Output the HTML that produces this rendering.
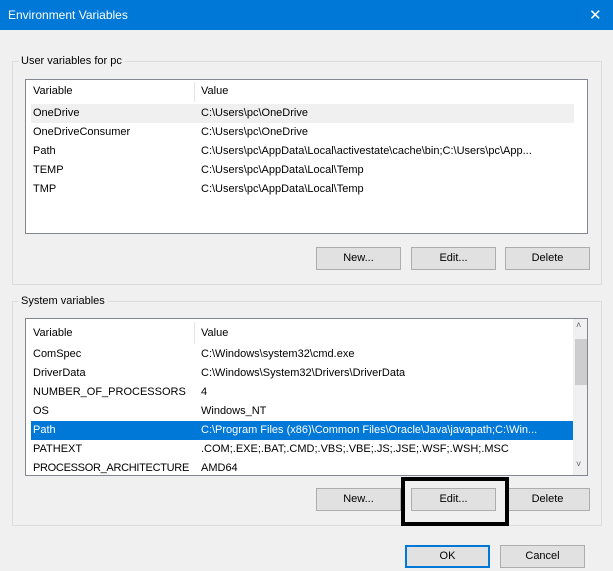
<!DOCTYPE html><html><head><style>
*{margin:0;padding:0;box-sizing:border-box}
body{width:613px;height:571px;background:#f0f0f0;font-family:"Liberation Sans",sans-serif;font-size:11px;color:#000;position:relative;overflow:hidden}
.a{position:absolute;white-space:nowrap}
.title{left:0;top:0;width:613px;height:30px;background:#0078d7;color:#fff}
.grp{border:1px solid #dcdcdc}
.lbl{background:#f0f0f0;padding:0 3px}
.list{background:#fff;border:1px solid #828790;overflow:hidden}
.btn{background:#e1e1e1;border:1px solid #adadad;text-align:center;line-height:21px;height:23px;width:85px}
.row{height:19px;line-height:19px;position:absolute;left:5px;width:543px}
.row span{position:absolute;left:2px}
.row span+span{left:170px}
</style></head><body>
<div class="a title"><span class="a" style="left:8px;top:8px;font-size:12px">Environment Variables</span><span class="a" style="left:589px;top:6px;font-size:15px;font-weight:300">✕</span></div>

<div class="a grp" style="left:12px;top:61px;width:590px;height:224px"></div>
<div class="a lbl" style="left:18px;top:55px">User variables for pc</div>
<div class="a list" style="left:25px;top:79px;width:563px;height:155px">
 <div class="a" style="left:168px;top:2px;width:1px;height:20px;background:#e5e5e5"></div>
 <div class="row" style="top:2px"><span>Variable</span><span>Value</span></div>
 <div class="row" style="top:24px;background:#f0f0f0;width:543px"><span>OneDrive</span><span>C:\Users\pc\OneDrive</span></div>
 <div class="row" style="top:43px"><span>OneDriveConsumer</span><span>C:\Users\pc\OneDrive</span></div>
 <div class="row" style="top:62px"><span>Path</span><span>C:\Users\pc\AppData\Local\activestate\cache\bin;C:\Users\pc\App...</span></div>
 <div class="row" style="top:81px"><span>TEMP</span><span>C:\Users\pc\AppData\Local\Temp</span></div>
 <div class="row" style="top:100px"><span>TMP</span><span>C:\Users\pc\AppData\Local\Temp</span></div>
</div>
<div class="a btn" style="left:316px;top:247px">New...</div>
<div class="a btn" style="left:411px;top:247px">Edit...</div>
<div class="a btn" style="left:505px;top:247px">Delete</div>

<div class="a grp" style="left:12px;top:301px;width:590px;height:225px"></div>
<div class="a lbl" style="left:18px;top:295px">System variables</div>
<div class="a list" style="left:25px;top:318px;width:563px;height:158px">
 <div class="a" style="left:168px;top:3px;width:1px;height:22px;background:#e5e5e5"></div>
 <div class="row" style="top:5px"><span>Variable</span><span>Value</span></div>
 <div class="row" style="top:26px"><span>ComSpec</span><span>C:\Windows\system32\cmd.exe</span></div>
 <div class="row" style="top:45px"><span>DriverData</span><span>C:\Windows\System32\Drivers\DriverData</span></div>
 <div class="row" style="top:64px"><span>NUMBER_OF_PROCESSORS</span><span>4</span></div>
 <div class="row" style="top:83px"><span>OS</span><span>Windows_NT</span></div>
 <div class="row" style="top:102px;background:#0078d7;color:#fff"><span>Path</span><span>C:\Program Files (x86)\Common Files\Oracle\Java\javapath;C:\Win...</span></div>
 <div class="row" style="top:121px"><span>PATHEXT</span><span>.COM;.EXE;.BAT;.CMD;.VBS;.VBE;.JS;.JSE;.WSF;.WSH;.MSC</span></div>
 <div class="row" style="top:140px"><span style="letter-spacing:-0.3px">PROCESSOR_ARCHITECTURE</span><span>AMD64</span></div>
 <div class="a" style="left:547px;top:0;width:15px;height:156px;background:#f0f0f0"></div>
 <div class="a" style="left:549px;top:20px;width:12px;height:46px;background:#cdcdcd"></div>
 <div class="a" style="left:550px;top:1px;font-size:9px;color:#606060">&#x2C4;</div>
 <div class="a" style="left:550px;top:140px;font-size:9px;color:#606060">&#x2C5;</div>
</div>
<div class="a btn" style="left:316px;top:488px">New...</div>
<div class="a btn" style="left:411px;top:488px">Edit...</div>
<div class="a btn" style="left:505px;top:488px">Delete</div>
<div class="a" style="left:401px;top:477px;width:108px;height:49px;border:4px solid #000"></div>

<div class="a btn" style="left:405px;top:545px;border:2px solid #0078d7;line-height:19px">OK</div>
<div class="a btn" style="left:500px;top:545px">Cancel</div>
</body></html>
